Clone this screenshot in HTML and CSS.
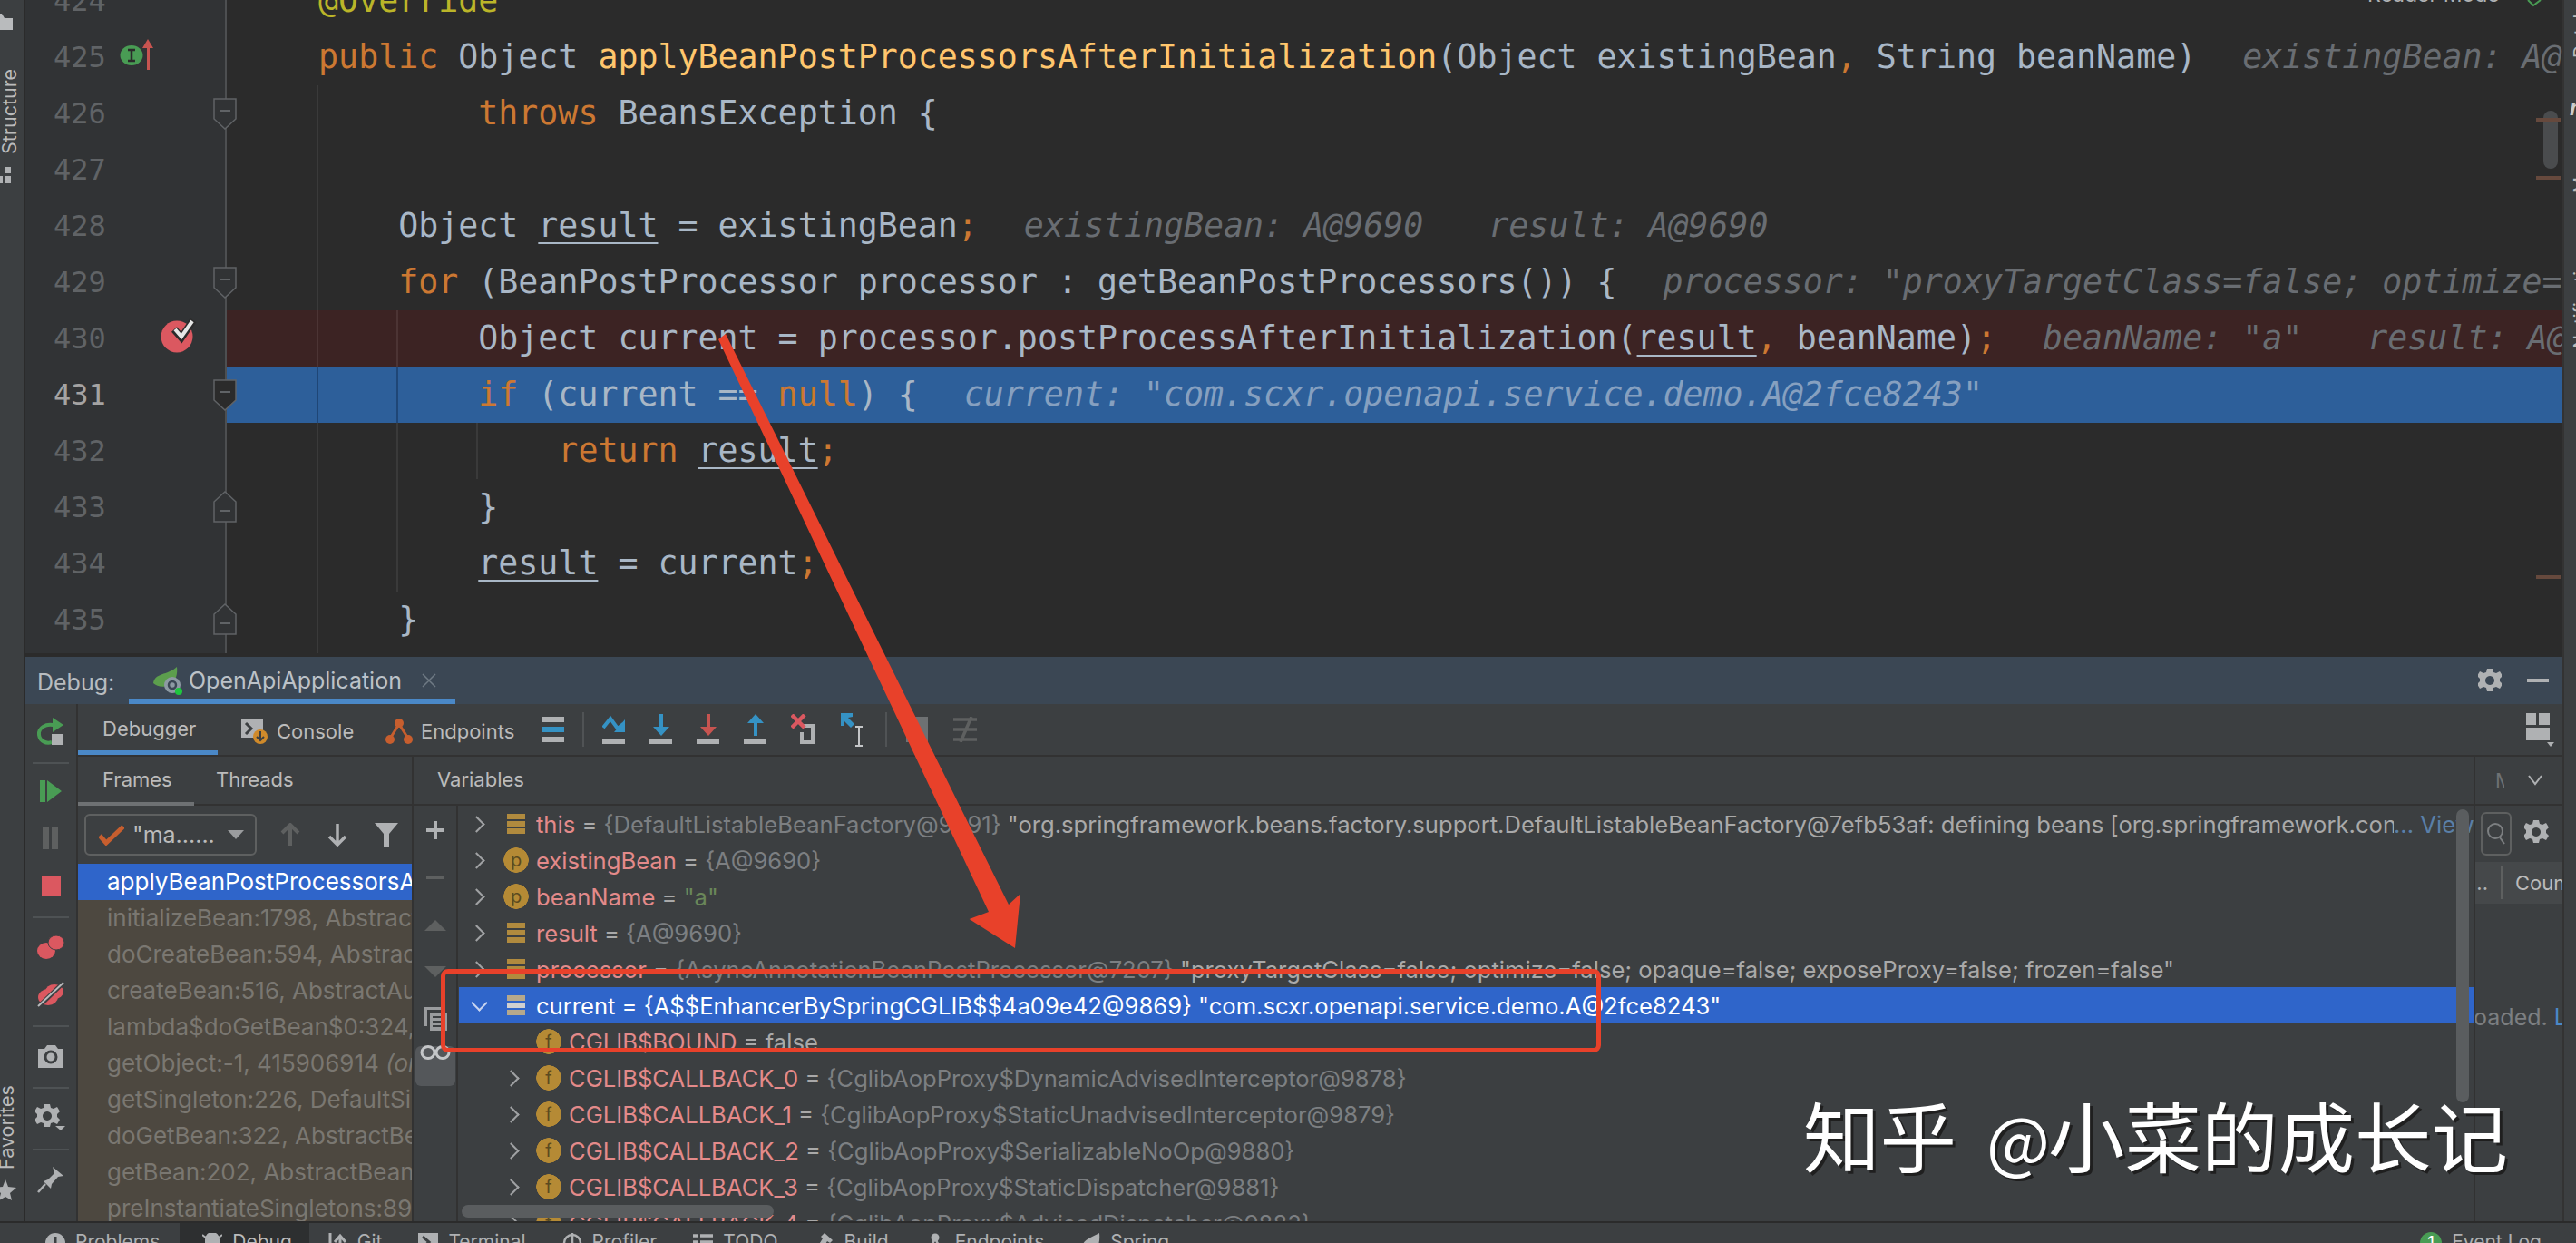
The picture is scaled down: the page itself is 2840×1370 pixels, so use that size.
FILE: index.html
```html
<!DOCTYPE html>
<html lang="en">
<head>
<meta charset="utf-8">
<title>IDE debugger</title>
<link rel="stylesheet" href="styles.css">
</head>
<body>
<div class="app">
  <div class="workspace">
    <aside class="left-strip">
      <svg class="strip-folder" width="20" height="20" viewBox="0 0 20 20"><path d="M0 2h8l3 5h9v13H0z" fill="#b9bbbd"/></svg>
      <span class="vtext structure">Structure</span>
      <svg class="strip-struct" width="16" height="20" viewBox="0 0 16 20"><path d="M0 11h7v8H0zM9 1h7v7H9zM9 11h7v8H9z" fill="#afb1b3"/></svg>
      <span class="vtext favorites">Favorites</span>
      <svg class="strip-star" width="22" height="24" viewBox="0 0 22 24"><path d="M9 1l3 8 9 1-7 6 2 8-7-4-7 4 2-8-7-6 9-1z" fill="#afb1b3"/></svg>
    </aside>

    <div class="center">
      <section class="editor">
        <div class="code">
          <div class="row"><div class="gutter"><span class="ln">424</span></div><div class="src"><span class="a">    @Override</span></div></div>
          <div class="row"><div class="gutter"><span class="ln">425</span>
            <svg class="impl" width="38" height="42" viewBox="0 0 38 42"><ellipse cx="13" cy="21" rx="12.500" ry="11" fill="#499c54"/><path d="M9 15h8M9 27h8M13 15v12" stroke="#2b2b2b" stroke-width="2.500" fill="none"/><path d="M31 3l6 10h-4v24h-3V13h-5z" fill="#c75450"/></svg>
          </div><div class="src">    <span class="k">public</span> Object <span class="m">applyBeanPostProcessorsAfterInitialization</span>(Object existingBean<span class="k">,</span> String beanName)<span class="h">existingBean: A@9690</span></div></div>
          <div class="row"><div class="gutter"><span class="ln">426</span>
            <svg class="fold" width="26" height="36" viewBox="0 0 26 36"><path d="M1 2h24v22L13 35 1 24z" fill="#313335" stroke="#606366" stroke-width="1.500"/><path d="M7 15h12" stroke="#606366" stroke-width="2"/></svg>
          </div><div class="src g1">            <span class="k">throws</span> BeansException {</div></div>
          <div class="row"><div class="gutter"><span class="ln">427</span></div><div class="src g1"></div></div>
          <div class="row"><div class="gutter"><span class="ln">428</span></div><div class="src g1">        Object <span class="u">result</span> = existingBean<span class="k">;</span><span class="h">existingBean: A@9690</span><span class="h">result: A@9690</span></div></div>
          <div class="row"><div class="gutter"><span class="ln">429</span>
            <svg class="fold" width="26" height="36" viewBox="0 0 26 36"><path d="M1 2h24v22L13 35 1 24z" fill="#313335" stroke="#606366" stroke-width="1.500"/><path d="M7 15h12" stroke="#606366" stroke-width="2"/></svg>
          </div><div class="src g1">        <span class="k">for</span> (BeanPostProcessor processor : getBeanPostProcessors()) {<span class="h">processor: "proxyTargetClass=false; optimize=false; opaque=false; exposeProxy=false; frozen=false"</span></div></div>
          <div class="row"><div class="gutter"><span class="ln">430</span>
            <svg class="bp" width="40" height="40" viewBox="0 0 40 40"><circle cx="18" cy="22" r="17.500" fill="#db5860"/><path d="M15 14l8 9L36 4" fill="none" stroke="#2b2b2b" stroke-width="8"/><path d="M16 14l7 8L35 5" fill="none" stroke="#e6e6e6" stroke-width="4"/></svg>
          </div><div class="src g2 bpline">            Object current = processor.postProcessAfterInitialization(<span class="u">result</span><span class="k">,</span> beanName)<span class="k">;</span><span class="h">beanName: "a"</span><span class="h">result: A@9690</span></div></div>
          <div class="row"><div class="gutter"><span class="ln cur">431</span>
            <svg class="fold" width="26" height="36" viewBox="0 0 26 36"><path d="M1 2h24v22L13 35 1 24z" fill="#2b2b2b" stroke="#606366" stroke-width="1.500"/><path d="M7 15h12" stroke="#606366" stroke-width="2"/></svg>
          </div><div class="src g2 execline">            <span class="k">if</span> (current == <span class="k">null</span>) {<span class="h">current: "com.scxr.openapi.service.demo.A@2fce8243"</span></div></div>
          <div class="row"><div class="gutter"><span class="ln">432</span></div><div class="src g3">                <span class="k">return</span> <span class="u">result</span><span class="k">;</span></div></div>
          <div class="row"><div class="gutter"><span class="ln">433</span>
            <svg class="fold" width="26" height="36" viewBox="0 0 26 36"><path d="M1 34h24V12L13 1 1 12z" fill="#313335" stroke="#606366" stroke-width="1.500"/><path d="M7 22h12" stroke="#606366" stroke-width="2"/></svg>
          </div><div class="src g2">            }</div></div>
          <div class="row"><div class="gutter"><span class="ln">434</span></div><div class="src g2">            <span class="u">result</span> = current<span class="k">;</span></div></div>
          <div class="row"><div class="gutter"><span class="ln">435</span>
            <svg class="fold" width="26" height="36" viewBox="0 0 26 36"><path d="M1 34h24V12L13 1 1 12z" fill="#313335" stroke="#606366" stroke-width="1.500"/><path d="M7 22h12" stroke="#606366" stroke-width="2"/></svg>
          </div><div class="src g1">        }</div></div>
          <div class="row"><div class="gutter"></div><div class="src g1"></div></div>
        </div>
        <div class="reader">Reader Mode</div>
        <svg class="reader-check" width="24" height="8" viewBox="0 0 24 8"><path d="M4 0l6 6L18 0" fill="none" stroke="#499c54" stroke-width="2"/></svg>
        <div class="thumb"></div>
        <i class="mark mark-a"></i><i class="mark mark-b"></i><i class="mark mark-c"></i>
      </section>

      <section class="debug">
        <header class="dbg-head">
          <span class="dbg-label">Debug:</span>
          <div class="dbg-tab">
            <svg width="34" height="34" viewBox="0 0 34 34"><path d="M1 20C3 8 16 12 27 2c1 8-1 16-8 20-6 3-14 2-18-2z" fill="#5c9e4d"/><circle cx="22" cy="22" r="9" fill="#8d9aa3"/><circle cx="22" cy="22" r="4" fill="none" stroke="#3b4754" stroke-width="2.500"/><circle cx="29" cy="29" r="4" fill="#1fc63f"/></svg>
            <span>OpenApiApplication</span>
            <svg class="dbg-x" width="16" height="16" viewBox="0 0 16 16"><path d="M1 1l14 14M15 1L1 15" stroke="#6f7a84" stroke-width="1.500"/></svg>
          </div>
          <svg class="head-gear" width="26" height="26" viewBox="0 0 26 26"><use href="#gear"/></svg>
          <i class="head-min"></i>
        </header>

        <div class="dbg-body">
          <nav class="tools">
            <div class="tool"><svg width="32" height="34" viewBox="0 0 32 34"><path d="M22 10C10 6 2 13 3 20c1 7 8 10 14 8" fill="none" stroke="#499c54" stroke-width="4"/><path d="M18 1l12 8-12 8z" fill="#499c54"/><path d="M17 19h13v12H17z" fill="#afb1b3"/></svg></div>
            <i class="sep sep-a"></i>
            <div class="tool"><svg width="26" height="26" viewBox="0 0 26 26"><path d="M1 1h6v24H1zM9 1l16 12L9 25z" fill="#499c54"/></svg></div>
            <div class="tool"><svg width="18" height="24" viewBox="0 0 18 24"><path d="M0 0h7v24H0zM10 0h7v24h-7z" fill="#5e6060"/></svg></div>
            <div class="tool"><i class="stop"></i></div>
            <i class="sep"></i>
            <div class="tool"><svg width="30" height="28" viewBox="0 0 30 28"><ellipse cx="10" cy="18" rx="10" ry="9" fill="#db5860"/><ellipse cx="21" cy="9" rx="9" ry="8" fill="#db5860" stroke="#3c3f41" stroke-width="1"/></svg></div>
            <div class="tool"><svg width="32" height="30" viewBox="0 0 32 30"><ellipse cx="13" cy="18" rx="11" ry="9" fill="#db5860"/><ellipse cx="20" cy="12" rx="10" ry="8" fill="#db5860"/><path d="M2 29L30 2" stroke="#3c3f41" stroke-width="5"/><path d="M2 28L30 2" stroke="#b9bbbd" stroke-width="2"/></svg></div>
            <i class="sep"></i>
            <div class="tool"><svg width="30" height="26" viewBox="0 0 30 26"><path d="M1 5h7l3-4h9l3 4h6v21H1z" fill="#afb1b3"/><circle cx="15" cy="14" r="6" fill="none" stroke="#3c3f41" stroke-width="3"/></svg></div>
            <i class="sep"></i>
            <div class="tool"><svg width="34" height="30" viewBox="0 0 34 30"><use href="#gear"/><path d="M22 24h11l-5 5z" fill="#afb1b3"/></svg></div>
            <i class="sep"></i>
            <div class="tool"><svg width="30" height="30" viewBox="0 0 30 30"><path d="M17 1l12 10-6 1-7 8-1 5-8-8 5-2 7-7z" fill="#afb1b3"/><path d="M9 20L1 29" stroke="#afb1b3" stroke-width="2.500"/></svg></div>
            <svg width="0" height="0" class="defs"><defs>
              <path id="gear" d="M10 0h6l1 4 3 1 4-2 3 5-3 3v3l3 3-3 5-4-2-3 1-1 4h-6l-1-4-3-1-4 2-3-5 3-3v-3L-1 8l3-5 4 2 3-1zM13 8a5 5 0 1 0 .01 0z" fill="#afb1b3" fill-rule="evenodd"/>
            </defs></svg>
          </nav>

          <div class="dbg-main">
            <div class="tabs">
              <div class="tab active-tab">Debugger</div>
              <div class="tab tab-console">
                <svg width="30" height="30" viewBox="0 0 30 30"><path d="M0 2h24v20H0z" fill="#afb1b3"/><path d="M5 6l6 6-6 6" fill="none" stroke="#3c3f41" stroke-width="3"/><circle cx="21" cy="21" r="8" fill="#d08a2a"/><path d="M21 15v9M17 21l4 4 4-4" fill="none" stroke="#3c3f41" stroke-width="2"/></svg>
                <span>Console</span>
              </div>
              <div class="tab tab-ends">
                <svg width="30" height="30" viewBox="0 0 30 30"><path d="M5 23L15 7l10 16" fill="none" stroke="#c75e2e" stroke-width="3"/><circle cx="15" cy="6" r="5" fill="#c75e2e"/><circle cx="5" cy="24" r="5" fill="#c75e2e"/><circle cx="25" cy="24" r="5" fill="#c75e2e"/></svg>
                <span>Endpoints</span>
              </div>
              <svg class="tb-layout" width="24" height="30" viewBox="0 0 24 30"><path d="M0 1h24v6H0zM0 23h24v6H0z" fill="#afb1b3"/><path d="M0 12h24v6H0z" fill="#3592c4"/></svg>
              <i class="vsep"></i>
              <div class="steps">
                <svg width="26" height="34" viewBox="0 0 26 34"><path d="M0 27h25v6H0z" fill="#afb1b3"/><path d="M1 15L9 5l8 11 6-5" fill="none" stroke="#3592c4" stroke-width="4"/><path d="M25 6v14H13z" fill="#3592c4"/></svg>
                <svg width="26" height="34" viewBox="0 0 26 34"><path d="M0 27h25v6H0z" fill="#afb1b3"/><path d="M11 0h4v14h7L13 24 4 14h7z" fill="#3592c4"/></svg>
                <svg width="26" height="34" viewBox="0 0 26 34"><path d="M0 27h25v6H0z" fill="#afb1b3"/><path d="M11 0h4v14h7L13 24 4 14h7z" fill="#c75450"/></svg>
                <svg width="26" height="34" viewBox="0 0 26 34"><path d="M0 27h25v6H0z" fill="#afb1b3"/><path d="M11 24V10H4L13 0l9 10h-7v14z" fill="#3592c4"/></svg>
                <svg width="28" height="34" viewBox="0 0 28 34"><path d="M14 11h12v22H10V20h4v9h8V15h-8z" fill="#afb1b3"/><path d="M1 1l14 14M15 1L1 15" stroke="#db5860" stroke-width="4.500"/></svg>
                <svg width="30" height="38" viewBox="0 0 30 38"><path d="M1 0h13v4L9 5l7 7-4 4-7-7-1 5H1z" fill="#3592c4" transform="translate(0 1)"/><path d="M17 16h8M17 37h8M21 16v21" stroke="#c4c6c8" stroke-width="2" fill="none"/></svg>
              </div>
              <i class="vsep"></i>
              <div class="steps steps-dim">
                <svg width="24" height="30" viewBox="0 0 24 30"><path d="M0 1h24v28H0z" fill="#6e7173"/></svg>
                <svg width="26" height="28" viewBox="0 0 26 28"><path d="M0 3h26M0 14h26M0 25h26M20 0L8 28" stroke="#5e6060" stroke-width="3.500" fill="none"/></svg>
              </div>
              <svg class="tb-right" width="32" height="38" viewBox="0 0 32 38"><path d="M1 1h11v13H1zM15 1h12v13H15zM1 17h26v14H1z" fill="#afb1b3"/><path d="M24 33h8l-4 5z" fill="#afb1b3"/></svg>
            </div>

            <div class="split">
              <div class="frames">
                <div class="subtabs">
                  <div class="subtab sub-active">Frames</div>
                  <div class="subtab">Threads</div>
                </div>
                <div class="frame-tools">
                  <div class="thread-select">
                    <svg width="28" height="24" viewBox="0 0 28 24"><path d="M1 13l7 8L27 3" fill="none" stroke="#c75e2e" stroke-width="5"/></svg>
                    <span>"ma......</span>
                    <svg class="caret" width="18" height="10" viewBox="0 0 18 10"><path d="M0 0h18l-9 10z" fill="#9a9c9e"/></svg>
                  </div>
                  <svg class="ft" width="22" height="26" viewBox="0 0 22 26"><path d="M11 25V3M2 11l9-9 9 9" fill="none" stroke="#5e6060" stroke-width="4"/></svg>
                  <svg class="ft" width="22" height="26" viewBox="0 0 22 26"><path d="M11 1v22M2 15l9 9 9-9" fill="none" stroke="#afb1b3" stroke-width="3.500"/></svg>
                  <svg class="ft" width="26" height="26" viewBox="0 0 26 26"><path d="M0 0h26L16 12v14h-6V12z" fill="#afb1b3"/></svg>
                </div>
                <ul class="stack">
                  <li class="sel-frame">applyBeanPostProcessorsAfterInitialization:431, AbstractAutowireCapableBeanFactory</li>
                  <li>initializeBean:1798, AbstractAutowireCapableBeanFactory</li>
                  <li>doCreateBean:594, AbstractAutowireCapableBeanFactory</li>
                  <li>createBean:516, AbstractAutowireCapableBeanFactory</li>
                  <li>lambda$doGetBean$0:324, AbstractBeanFactory</li>
                  <li>getObject:-1, 415906914 <em>(org.springframework)</em></li>
                  <li>getSingleton:226, DefaultSingletonBeanRegistry</li>
                  <li>doGetBean:322, AbstractBeanFactory</li>
                  <li>getBean:202, AbstractBeanFactory</li>
                  <li>preInstantiateSingletons:897, DefaultListableBeanFactory</li>
                </ul>
              </div>

              <div class="vars">
                <div class="vars-head">Variables</div>
                <div class="vars-body">
                  <div class="var-tools">
                    <svg width="22" height="22" viewBox="0 0 22 22"><path d="M11 1v20M1 11h20" stroke="#afb1b3" stroke-width="4"/></svg>
                    <svg width="22" height="22" viewBox="0 0 22 22"><path d="M1 11h20" stroke="#5e6060" stroke-width="4"/></svg>
                    <svg width="24" height="22" viewBox="0 0 24 22"><path d="M12 5l12 12H0z" fill="#5e6060"/></svg>
                    <svg width="24" height="22" viewBox="0 0 24 22"><path d="M0 5h24L12 17z" fill="#5e6060"/></svg>
                    <svg width="26" height="28" viewBox="0 0 26 28"><path d="M1 1h18v3H4v18H1z" fill="#9a9c9e"/><path d="M7 7h19v20H7z" fill="#9a9c9e"/><path d="M10 12h13M10 17h13M10 22h13" stroke="#3c3f41" stroke-width="2"/></svg>
                    <div class="glasses"><svg width="34" height="18" viewBox="0 0 34 18"><ellipse cx="9" cy="9" rx="7" ry="6.500" fill="none" stroke="#c4c6c8" stroke-width="3"/><ellipse cx="25" cy="9" rx="7" ry="6.500" fill="none" stroke="#c4c6c8" stroke-width="3"/></svg></div>
                  </div>
                  <div class="tree">
                    <div class="vrow"><i class="chev"></i><i class="vi bars"></i><span class="vtxt"><b>this</b> = <s>{DefaultListableBeanFactory@9691}</s> <q>"org.springframework.beans.factory.support.DefaultListableBeanFactory@7efb53af: defining beans [org.springframework.context.annotation.internalConfigurationAnnotationProcessor</q></span><span class="view-link">... View</span></div>
                    <div class="vrow"><i class="chev"></i><i class="vi circ">p</i><span class="vtxt"><b>existingBean</b> = <s>{A@9690}</s></span></div>
                    <div class="vrow"><i class="chev"></i><i class="vi circ">p</i><span class="vtxt"><b>beanName</b> = <u>"a"</u></span></div>
                    <div class="vrow"><i class="chev"></i><i class="vi bars"></i><span class="vtxt"><b>result</b> = <s>{A@9690}</s></span></div>
                    <div class="vrow"><i class="chev"></i><i class="vi bars"></i><span class="vtxt"><b>processor</b> = <s>{AsyncAnnotationBeanPostProcessor@7207}</s> <q>"proxyTargetClass=false; optimize=false; opaque=false; exposeProxy=false; frozen=false"</q></span></div>
                    <div class="vrow vsel"><i class="chev open"></i><i class="vi bars"></i><span class="vtxt">current = {A$$EnhancerBySpringCGLIB$$4a09e42@9869} "com.scxr.openapi.service.demo.A@2fce8243"</span></div>
                    <div class="vrow d1"><i class="chev none"></i><i class="vi circ">f</i><span class="vtxt"><b>CGLIB$BOUND</b> = <q>false</q></span></div>
                    <div class="vrow d1"><i class="chev"></i><i class="vi circ">f</i><span class="vtxt"><b>CGLIB$CALLBACK_0</b> = <s>{CglibAopProxy$DynamicAdvisedInterceptor@9878}</s></span></div>
                    <div class="vrow d1"><i class="chev"></i><i class="vi circ">f</i><span class="vtxt"><b>CGLIB$CALLBACK_1</b> = <s>{CglibAopProxy$StaticUnadvisedInterceptor@9879}</s></span></div>
                    <div class="vrow d1"><i class="chev"></i><i class="vi circ">f</i><span class="vtxt"><b>CGLIB$CALLBACK_2</b> = <s>{CglibAopProxy$SerializableNoOp@9880}</s></span></div>
                    <div class="vrow d1"><i class="chev"></i><i class="vi circ">f</i><span class="vtxt"><b>CGLIB$CALLBACK_3</b> = <s>{CglibAopProxy$StaticDispatcher@9881}</s></span></div>
                    <div class="vrow d1"><i class="chev"></i><i class="vi circ">f</i><span class="vtxt"><b>CGLIB$CALLBACK_4</b> = <s>{CglibAopProxy$AdvisedDispatcher@9882}</s></span></div>
                    <div class="vscroll"></div>
                    <div class="hscroll"></div>
                  </div>
                </div>
              </div>

              <div class="side">
                <div class="side-head"><span class="side-m">M</span><svg width="16" height="12" viewBox="0 0 16 12"><path d="M1 1l7 9 7-9" fill="none" stroke="#afb1b3" stroke-width="2"/></svg></div>
                <div class="side-tools">
                  <div class="search"><svg width="24" height="28" viewBox="0 0 24 28"><circle cx="11" cy="11" r="8" fill="none" stroke="#7c7f81" stroke-width="2"/><path d="M16 18l5 7" stroke="#7c7f81" stroke-width="2"/></svg></div>
                  <svg width="32" height="30" viewBox="0 0 32 30"><use href="#gear"/></svg>
                </div>
                <div class="side-cols"><span class="side-dots">..</span><span class="side-count">Count</span></div>
                <div class="side-msg">loaded. <span>Load</span></div>
              </div>
            </div>
          </div>
        </div>
      </section>
    </div>

    <aside class="right-strip">
      <span class="vtext rt-a">Database</span>
      <span class="rt-m">m</span>
      <span class="vtext rt-b">Maven</span>
      <span class="vtext rt-c">Notifications</span>
    </aside>
  </div>

  <footer class="status">
    <div class="st first"><svg width="22" height="22" viewBox="0 0 22 22"><circle cx="11" cy="11" r="11" fill="#afb1b3"/><path d="M11 4v9" stroke="#3c3f41" stroke-width="3"/></svg><span>Problems</span></div>
    <div class="st st-active"><svg width="22" height="22" viewBox="0 0 22 22"><path d="M4 7a7 7 0 0 1 14 0v15H4zM0 2l5 4M22 2l-5 4" fill="#afb1b3" stroke="#afb1b3" stroke-width="2"/></svg><span>Debug</span></div>
    <div class="st"><svg width="22" height="22" viewBox="0 0 22 22"><path d="M3 0v22M14 22V4M8 10l6-7 6 7" fill="none" stroke="#afb1b3" stroke-width="3"/></svg><span>Git</span></div>
    <div class="st"><svg width="22" height="22" viewBox="0 0 22 22"><path d="M0 0h22v22H0z" fill="#afb1b3"/><path d="M5 4l7 6-7 6" fill="none" stroke="#3c3f41" stroke-width="3"/></svg><span>Terminal</span></div>
    <div class="st"><svg width="22" height="22" viewBox="0 0 22 22"><circle cx="11" cy="11" r="9" fill="none" stroke="#afb1b3" stroke-width="2.500"/><path d="M11 0v11l5 6" fill="none" stroke="#afb1b3" stroke-width="2.500"/></svg><span>Profiler</span></div>
    <div class="st"><svg width="22" height="22" viewBox="0 0 22 22"><path d="M0 3h5M8 3h14M0 10h5M8 10h14M0 17h5M8 17h14" stroke="#afb1b3" stroke-width="3.500"/></svg><span>TODO</span></div>
    <div class="st"><svg width="22" height="22" viewBox="0 0 22 22"><path d="M12 0l9 8-3 3-3-2-8 13-5-3L10 6 8 4z" fill="#afb1b3"/></svg><span>Build</span></div>
    <div class="st"><svg width="22" height="22" viewBox="0 0 22 22"><path d="M4 20L11 6l7 14" fill="none" stroke="#afb1b3" stroke-width="2.500"/><circle cx="11" cy="5" r="4.500" fill="#afb1b3"/></svg><span>Endpoints</span></div>
    <div class="st"><svg width="22" height="22" viewBox="0 0 22 22"><path d="M1 20C1 8 10 6 21 0c1 10-1 18-9 20-4 1-8 0-11 0z" fill="#afb1b3"/></svg><span>Spring</span></div>
    <div class="st st-log"><i class="badge">1</i><span>Event Log</span></div>
  </footer>

  <svg class="arrow" width="2840" height="1370" viewBox="0 0 2840 1370"><path d="M792 374L800 368 1112 997 1125 985 1119 1045 1068.600 1013 1090 1005z" fill="#e8412a"/></svg>
  <div class="red-box"></div>
  <div class="watermark">知乎 <span class="wm-at">@</span>小菜的成长记</div>
</div>
</body>
</html>
```
FILE: styles.css
```css
*{box-sizing:border-box}
html,body{margin:0;padding:0;background:#3c3f41}
.app{position:relative;width:2840px;height:1370px;overflow:hidden;display:flex;flex-direction:column;font-family:Inter,"Liberation Sans",sans-serif;color:#bbbbbb}
.workspace{display:flex;height:1346px;flex:none}
.left-strip{width:28px;flex:none;background:#3c3f41;border-right:2px solid #2b2b2b;display:flex;flex-direction:column;overflow:hidden;height:1346px}
.vtext{writing-mode:vertical-rl;transform:rotate(180deg);white-space:nowrap;font-size:21.500px;line-height:26px;color:#bbbbbb;display:block}
.strip-folder{margin:13px 0 0 -6px;flex:none}
.structure{margin:45px 0 0 -6px;height:92px;flex:none;display:flex;align-items:center;justify-content:flex-start}
.strip-struct{margin:13px 0 0 -4px;flex:none}
.favorites{margin:996px 0 0 -6px;height:90px;flex:none}
.strip-star{margin:10px 0 0 -3px;flex:none}
.center{flex:1;min-width:0;display:flex;flex-direction:column}
.right-strip{width:15px;flex:none;background:#3c3f41;border-left:2px solid #333;overflow:hidden;display:flex;flex-direction:column}
.rt-a{margin:-2px 0 0 5px;height:66px;font-size:20px}
.rt-m{margin:45px 0 0 6px;font:italic 700 24px/20px "Liberation Sans",sans-serif;color:#ccc}
.rt-b{margin:14px 0 0 5px;height:70px;font-size:20px}
.rt-c{margin:36px 0 0 5px;height:135px;font-size:20px}

.editor{position:relative;height:720px;flex:none;background:#2b2b2b;overflow:hidden}
.code{margin-top:-30px;font-family:"DejaVu Sans Mono","Liberation Mono",monospace;font-size:36.6px;color:#a9b7c6}
.row{display:flex;height:62px}
.gutter{width:222px;flex:none;background:#313335;border-right:2px solid #4d4f51;display:flex;align-items:center;padding-left:31px;position:relative}
.ln{font-size:32px;color:#606366;width:60px;flex:none;line-height:62px}
.ln.cur{color:#a4a3a3}
.impl{margin-left:13px;flex:none;margin-top:-4px}
.bp{margin-left:58px;flex:none;margin-top:-8px}
.fold{margin-left:auto;margin-right:-13px;flex:none;position:relative;z-index:1}
.src{flex:1;min-width:0;white-space:pre;line-height:62px;padding-left:13px;overflow:hidden;--guide:#3a3a3a}
.g1,.g2,.g3{background-repeat:no-repeat;background-size:2px 100%}
.g1{background-image:linear-gradient(var(--guide),var(--guide));background-position:99px 0}
.g2{background-image:linear-gradient(var(--guide),var(--guide)),linear-gradient(var(--guide),var(--guide));background-position:99px 0,187px 0}
.g3{background-image:linear-gradient(var(--guide),var(--guide)),linear-gradient(var(--guide),var(--guide)),linear-gradient(var(--guide),var(--guide));background-position:99px 0,187px 0,275px 0}
.bpline{background-color:#3c2323;--guide:#4c3434}
.execline{background-color:#2d5f9a;--guide:#1f4676}
.a{color:#bbb529}
.k{color:#cc7832}
.m{color:#ffc66d}
.u{text-decoration:underline;text-underline-offset:6px;text-decoration-thickness:2px}
.h{font-style:italic;color:#696d72;margin-left:51px}
.h + .h{margin-left:72px}
.execline .h{color:#86a0c0}
.reader{position:absolute;left:2582px;top:-20px;font-size:23px;color:#afb1b3}
.reader-check{position:absolute;left:2755px;top:0}
.thumb{position:absolute;left:2776px;top:122px;width:16px;height:64px;border-radius:8px;background:#4a4c4e}
.mark{position:absolute;left:2768px;width:28px;height:4px;background:#66493d}
.mark-a{top:130px}.mark-b{top:194px}.mark-c{top:634px}

.debug{flex:1;min-height:0;display:flex;flex-direction:column;background:#3c3f41;border-top:4px solid #2b2b2b}
.dbg-head{height:52px;flex:none;background:#3b4754;display:flex;align-items:center;font-size:25px;color:#b8bcc0;padding-left:13px}
.dbg-label{width:101px;flex:none;padding-top:4px}
.dbg-tab{width:360px;height:52px;flex:none;border-bottom:6px solid #4a88c7;display:flex;align-items:center;padding:6px 0 0 26px;gap:6px;color:#bcc2c8;white-space:nowrap}
.dbg-x{margin-left:16px}
.head-gear{margin-left:auto;margin-right:28px}
.head-min{width:24px;height:4px;background:#afb1b3;margin-right:15px}
.dbg-body{flex:1;display:flex;min-height:0}
.tools{width:58px;flex:none;border-right:2px solid #323232;display:flex;flex-direction:column;align-items:center;padding-top:5px}
.tool{height:52px;flex:none;display:flex;align-items:center;justify-content:center}
.stop{display:block;width:21px;height:21px;background:#db5860}
.sep{display:block;width:40px;height:2px;background:#4e5254;margin:8px 0 6px;flex:none}
.sep-a{margin:7px 0 4px}
.defs{position:absolute}
.dbg-main{flex:1;min-width:0;display:flex;flex-direction:column}
.tabs{height:58px;flex:none;border-bottom:2px solid #323232;display:flex;align-items:center;font-size:22px;position:relative}
.tab{height:56px;display:flex;align-items:center;white-space:nowrap;gap:9px;padding-top:3px}
.active-tab{width:154px;padding:2px 0 0 27px;border-bottom:5px solid #4a88c7}
.tab-console{margin-left:26px;width:159px}
.tab-ends{width:173px}
.tb-layout{flex:none}
.vsep{display:block;width:2px;height:38px;background:#505355;margin:0 20px;flex:none}
.steps{display:flex;align-items:center;gap:26px}
.steps-dim{gap:28px;margin-left:1px}
.tb-right{margin-left:auto;margin-right:9px}
.split{flex:1;display:flex;min-height:0}
.frames{width:370px;flex:none;border-right:2px solid #323232;display:flex;flex-direction:column;overflow:hidden}
.subtabs{height:54px;flex:none;border-bottom:2px solid #323232;display:flex;font-size:22px}
.subtab{height:54px;line-height:50px;padding-left:27px;width:128px}
.sub-active{border-bottom:4px solid #6e7173;width:128px}
.subtab + .subtab{padding-left:24px}
.frame-tools{height:64px;flex:none;display:flex;align-items:center;padding-left:7px}
.thread-select{width:190px;height:46px;border:2px solid #5e6060;border-radius:6px;display:flex;align-items:center;padding-left:14px;gap:9px;font-size:25px}
.caret{margin-left:auto;margin-right:12px}
.ft{margin-left:30px;flex:none}
.thread-select + .ft{margin-left:26px}
.stack{list-style:none;margin:0;padding:0;flex:1;background:#4d4840;overflow:hidden;font-size:26px;color:#7a7771}
.stack li{height:40px;line-height:40px;padding-left:32px;white-space:nowrap}
.stack .sel-frame{background:#2f65ca;color:#fff}
.vars{flex:1;min-width:0;display:flex;flex-direction:column}
.vars-head{height:54px;flex:none;border-bottom:2px solid #323232;font-size:22px;line-height:50px;padding-left:26px}
.vars-body{flex:1;display:flex;min-height:0}
.var-tools{width:49px;flex:none;border-right:2px solid #323232;display:flex;flex-direction:column;align-items:center;padding-top:16px}
.var-tools svg{flex:none}
.var-tools svg:nth-child(1){margin-bottom:30px}
.var-tools svg:nth-child(2){margin-bottom:31px}
.var-tools svg:nth-child(3){margin-bottom:29px}
.var-tools svg:nth-child(4){margin-bottom:27px}
.var-tools svg:nth-child(5){margin-bottom:16px}
.glasses{width:44px;height:44px;border-radius:6px;background:#54575a;display:flex;align-items:center;justify-content:center;flex:none}
.tree{flex:1;min-width:0;position:relative;overflow:hidden;font-size:25.600px}
.vrow{height:40px;display:flex;align-items:center;padding-left:17px;white-space:nowrap;color:#a9a9a9}
.chev{display:block;width:11px;height:18px;flex:none;position:relative}
.chev::before{content:"";position:absolute;left:-3px;top:3px;width:11px;height:11px;border-top:2px solid #a0a2a4;border-right:2px solid #a0a2a4;transform:rotate(45deg)}
.chev.open::before{transform:rotate(135deg);left:0;top:0;border-color:#c8d4f0}
.chev.none::before{display:none}
.vi{display:block;flex:none;margin-left:20px;margin-right:6px;width:32px;height:28px;font-style:normal}
.bars{background:linear-gradient(#b08a3e 0 6px,transparent 6px 8px,#b08a3e 8px 14px,transparent 14px 16px,#b08a3e 16px 22px,transparent 22px);background-size:20px 22px;background-repeat:no-repeat;background-position:6px 3px}
.vsel .bars{background-image:linear-gradient(#b5a88c 0 6px,transparent 6px 8px,#d0d0d0 8px 14px,transparent 14px 16px,#b5a88c 16px 22px,transparent 22px)}
.circ{position:relative;color:#5b4a20;text-align:center;line-height:28px;font-size:20px;background:radial-gradient(circle at 16px 14px,#b58a35 13.500px,transparent 14px)}
.vtxt{flex:1;min-width:0;overflow:hidden}
.vtxt b{font-weight:400;color:#e38a8a}
.vtxt s{text-decoration:none;color:#7c7f82}
.vtxt q{quotes:none;color:#a9a9a9}
.vtxt u{text-decoration:none;color:#6a8759}
.view-link{flex:none;color:#5a7fa8;width:88px}
.vsel{background:#2f65ca;color:#fff;margin-left:1px;padding-left:16px}
.d1{padding-left:55px}
.d1 .vi{margin-left:18px}
.vscroll{position:absolute;left:2203px;top:4px;width:14px;height:323px;border-radius:7px;background:#5a5d5f}
.hscroll{position:absolute;left:4px;top:440px;width:344px;height:14px;border-radius:7px;background:#5a5d5f}
.side{width:98px;flex:none;border-left:2px solid #323232;overflow:hidden;display:flex;flex-direction:column}
.side-head{height:54px;flex:none;border-bottom:2px solid #323232;display:flex;align-items:center;font-size:22px;padding-left:22px;gap:26px;white-space:nowrap}
.side-m{width:10px;overflow:hidden;color:#6e7173}
.side-tools{height:62px;flex:none;display:flex;align-items:center;padding-left:6px;gap:14px}
.search{width:34px;height:48px;border:2px solid #5e6060;border-radius:6px;display:flex;align-items:center;justify-content:center;overflow:hidden;flex:none}
.side-cols{height:46px;flex:none;background:#45484a;display:flex;align-items:center;font-size:22px;white-space:nowrap}
.side-dots{width:30px;text-align:right;padding-right:14px;border-right:2px solid #5e6060;height:36px;line-height:36px;margin-right:14px;flex:none;overflow:visible;color:#afb1b3;margin-left:0}
.side-count{color:#bbbbbb}
.side-msg{margin:108px 0 0 -8px;font-size:25px;white-space:nowrap;color:#7c7f82;line-height:34px}
.side-msg span{color:#4a88c7}

.status{height:24px;flex:none;background:#3c3f41;border-top:2px solid #2b2b2b;display:flex;font-size:21px;overflow:hidden;color:#afb1b3}
.st{display:flex;gap:11px;padding:8px 20px 0;height:40px;flex:none;line-height:26px;white-space:nowrap}
.st svg{flex:none;margin-top:3px}
.first{padding-left:50px;padding-right:22px}
.st-active{background:#2d2f30;color:#bbbbbb;padding-left:25px;padding-right:19px}
.st-log{margin-left:auto;padding-right:38px}
.badge{display:block;width:24px;height:24px;border-radius:50%;background:#499c54;color:#fff;font-style:normal;text-align:center;font-size:19px;line-height:24px;margin-top:2px}

.arrow{position:absolute;left:0;top:0;pointer-events:none}
.red-box{position:absolute;left:486px;top:1068px;width:1279px;height:92px;border:5px solid #e8412a;border-radius:8px;pointer-events:none}
.watermark{position:absolute;left:1988px;top:1197px;font-family:"Noto Sans CJK SC",sans-serif;font-size:84.500px;line-height:104px;color:#fff;white-space:nowrap;text-shadow:3px 3px 0 #1f1f1f}
.wm-at{font-size:74px;margin-left:14px;margin-right:-2px}
```
